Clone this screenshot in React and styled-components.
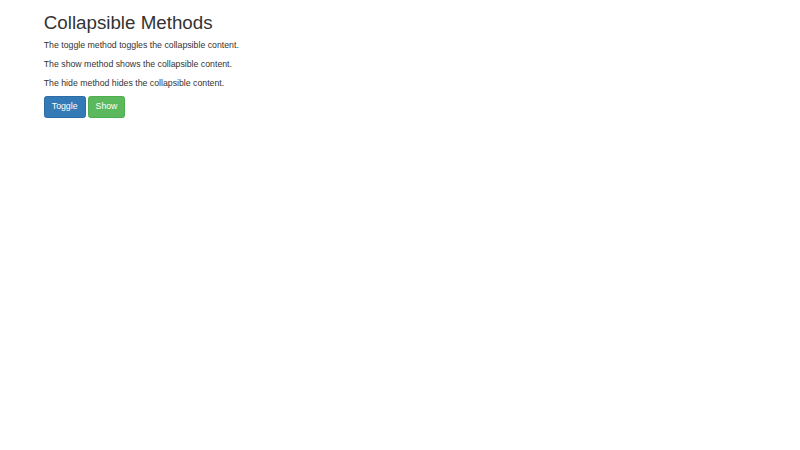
import React from "react";
import styled, { createGlobalStyle } from "styled-components";

const Global = createGlobalStyle`
  html, body { margin: 0; padding: 0; background: #fff; }
  body {
    font-family: "Liberation Sans", Arial, Helvetica, sans-serif;
    font-size: 8.75px;
    line-height: 1.42857;
    color: #333;
  }
  * { box-sizing: border-box; }
`;

const Container = styled.div`
  width: 731.25px;
  margin: 0 auto;
  padding: 0 9.375px;
`;

const Title = styled.h2`
  font-family: inherit;
  font-weight: 500;
  font-size: 18.75px;
  line-height: 1.1;
  color: inherit;
  margin: 12.5px 0 6.25px;
`;

const Para = styled.p`
  margin: 0 0 6.25px;
`;

const Actions = styled.div`
  display: flex;
  gap: 2px;
`;

const Button = styled.button`
  display: inline-block;
  font-family: inherit;
  font-size: 8.75px;
  line-height: 1.42857;
  padding: 3.75px 7px;
  border: 0.625px solid ${(p) => p.$border};
  border-radius: 2.5px;
  background: ${(p) => p.$bg};
  color: #fff;
  cursor: pointer;
`;

export default function App() {
  return (
    <>
      <Global />
      <Container>
        <Title>Collapsible Methods</Title>
        <Para>The toggle method toggles the collapsible content.</Para>
        <Para>The show method shows the collapsible content.</Para>
        <Para>The hide method hides the collapsible content.</Para>
        <Actions>
          <Button $bg="#337ab7" $border="#2e6da4">Toggle</Button>
          <Button $bg="#5cb85c" $border="#4cae4c">Show</Button>
        </Actions>
      </Container>
    </>
  );
}
